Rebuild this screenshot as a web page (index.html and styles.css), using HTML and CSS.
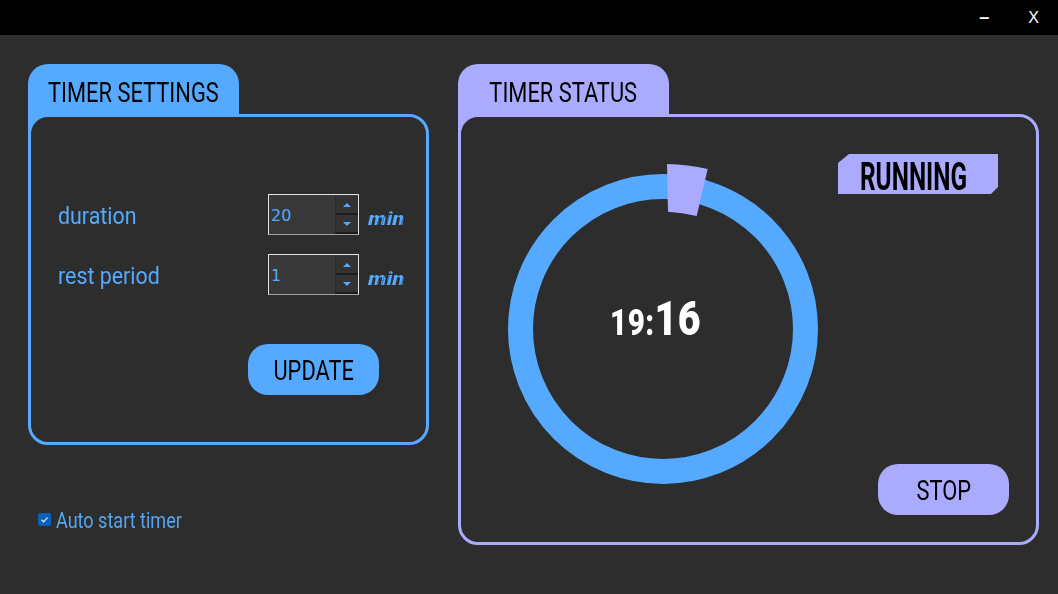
FILE: index.html
```html
<!DOCTYPE html>
<html lang="en">
<head>
<meta charset="utf-8">
<title>Timer</title>
<link rel="stylesheet" href="styles.css">
</head>
<body>
<div class="window">
  <header class="titlebar">
    <span class="win-btn win-min">–</span>
    <span class="win-btn win-close">X</span>
  </header>
  <main class="content">
    <section class="left-col">
      <div class="tab tab-blue"><span class="tab-text">TIMER SETTINGS</span></div>
      <div class="panel panel-blue settings">
        <div class="row">
          <span class="label"><span class="label-text">duration</span></span>
          <div class="spin"><span class="spin-value">20</span><div class="spin-btns"><span class="spin-btn"><i class="arrow-up"></i></span><span class="spin-btn"><i class="arrow-down"></i></span></div></div>
          <span class="unit">min</span>
        </div>
        <div class="row">
          <span class="label"><span class="label-text">rest period</span></span>
          <div class="spin"><span class="spin-value">1</span><div class="spin-btns"><span class="spin-btn"><i class="arrow-up"></i></span><span class="spin-btn"><i class="arrow-down"></i></span></div></div>
          <span class="unit">min</span>
        </div>
        <button class="btn btn-blue update"><span class="btn-text">UPDATE</span></button>
      </div>
      <label class="auto">
        <span class="check"><svg viewBox="0 0 13 13" width="13" height="13"><path d="M3.500 6.800 5.600 8.800 9.600 4.600" fill="none" stroke="#cfe3f7" stroke-width="1.300"/></svg></span>
        <span class="auto-text">Auto start timer</span>
      </label>
    </section>
    <section class="right-col">
      <div class="tab tab-purple"><span class="tab-text">TIMER STATUS</span></div>
      <div class="panel panel-purple status">
        <div class="dial">
          <svg class="ring" viewBox="0 0 330 340" width="330" height="340">
            <circle cx="165" cy="175" r="142.500" fill="none" stroke="#55aaff" stroke-width="25"/>
            <path d="M169 10 Q190 10.500 209.700 15 L198.700 62 Q184 58.500 170 57.700 Z" fill="#aaaaff"/>
          </svg>
          <div class="time"><span class="time-min">19:</span><span class="time-sec">16</span></div>
        </div>
        <div class="status-side">
          <div class="badge"><span class="badge-text">RUNNING</span></div>
          <button class="btn btn-purple stop"><span class="btn-text">STOP</span></button>
        </div>
      </div>
    </section>
  </main>
</div>
</body>
</html>
```
FILE: styles.css
```css
* { box-sizing: border-box; }
html, body { margin: 0; padding: 0; }
body {
  width: 1058px;
  height: 594px;
  overflow: hidden;
  background: #2d2d2d;
  font-family: Roboto, "Liberation Sans", sans-serif;
}
.window { display: flex; flex-direction: column; height: 594px; }
.titlebar {
  flex: 0 0 35px;
  background: #000;
  color: #fff;
  display: flex;
  justify-content: flex-end;
  align-items: center;
  padding-right: 19px;
  gap: 39px;
}
.win-btn { font-family: "Liberation Sans", sans-serif; font-size: 16px; line-height: 35px; }
.win-min { font-weight: 700; font-size: 18px; }
.content { display: flex; gap: 29px; padding: 29px 19px 0 28px; }
.left-col { width: 401px; flex: none; }
.right-col { width: 581px; flex: none; }
.tab {
  width: 211px;
  height: 70px;
  margin-bottom: -20px;
  border-radius: 20px 20px 0 0;
  color: #000;
  font-size: 27px;
  line-height: 59px;
  text-align: center;
  white-space: nowrap;
}
.tab-text { display: inline-block; transform: scaleX(0.81); }
.tab-blue { background: #55aaff; }
.tab-purple { background: #aaaaff; }
.panel {
  position: relative;
  background: #2d2d2d;
  border: 3px solid;
  border-radius: 20px;
}
.panel-blue { border-color: #55aaff; }
.panel-purple { border-color: #aaaaff; }
.settings {
  height: 331px;
  padding: 77px 23px 0 27px;
  display: flex;
  flex-direction: column;
  gap: 19px;
}
.row { display: flex; align-items: center; height: 41px; }
.label { flex: 1; color: #55aaff; font-size: 23px; line-height: 46px; margin-top: 4px; }
.label-text { display: inline-block; transform: scaleX(0.93); transform-origin: left center; }
.spin {
  width: 91px;
  height: 41px;
  display: flex;
  justify-content: space-between;
  background: #383838;
  border: 1px solid #e0e0e0;
  border-bottom-color: #a0a0a0;
}
.spin-value {
  font-family: "DejaVu Sans", sans-serif;
  font-size: 16px;
  line-height: 41px;
  color: #55aaff;
  padding-left: 2px;
}
.spin-btns { display: flex; flex-direction: column; width: 23px; margin-top: 1px; }
.spin-btn {
  flex: 1;
  display: flex;
  align-items: center;
  justify-content: center;
  background: #333;
  border-left: 1px solid #2a2a2a;
  border-bottom: 2px solid #1c1c1c;
}
.arrow-up, .arrow-down { width: 0; height: 0; border-left: 4px solid transparent; border-right: 4px solid transparent; }
.arrow-up { border-bottom: 4px solid #55aaff; }
.arrow-down { border-top: 4px solid #55aaff; }
.unit {
  width: 31px;
  margin-left: 9px;
  margin-top: 8px;
  margin-right: 4px;
  font-weight: 900;
  font-style: italic;
  font-size: 19px;
  line-height: 20px;
  color: transparent;
  background: repeating-linear-gradient(105deg, #55aaff 0 3px, #3f78b0 3px 4px);
  -webkit-background-clip: text;
  background-clip: text;
  transform: scaleX(1.16);
  transform-origin: left center;
}
.btn {
  height: 51px;
  width: 131px;
  border: 0;
  border-radius: 20px;
  font-family: inherit;
  font-size: 27px;
  color: #000;
  padding: 3px 0 0;
}
.btn-text { display: inline-block; transform: scaleX(0.81); }
.btn-blue { background: #55aaff; }
.btn-purple { background: #aaaaff; }
.update { align-self: flex-end; margin: 30px 24px 0 0; }
.auto {
  display: flex;
  align-items: center;
  gap: 5px;
  margin: 63px 0 0 10px;
  color: #55a5f0;
  font-size: 22px;
}
.auto-text { display: inline-block; transform: scaleX(0.82); transform-origin: left center; white-space: nowrap; }
.check { width: 13px; height: 13px; border-radius: 2px; background: #0a60b8; display: block; line-height: 0; margin-bottom: 2px; }
.status {
  height: 431px;
  padding: 34px 27px 27px 37px;
  display: flex;
}
.dial { position: relative; width: 330px; height: 340px; margin-top: 3px; flex: none; }
.ring { display: block; }
.time {
  position: absolute;
  left: 0;
  right: 15px;
  top: 130px;
  text-align: center;
  color: #fff;
  font-weight: 900;
  line-height: 70px;
  white-space: nowrap;
  letter-spacing: 0.5px;
  transform: scaleX(0.82);
}
.time-min { font-size: 36px; }
.time-sec { font-size: 48px; }
.status-side { flex: 1; display: flex; flex-direction: column; align-items: flex-end; justify-content: space-between; padding-top: 3px; }
.badge {
  width: 160px;
  height: 40px;
  margin-right: 11px;
  padding-left: 22px;
  background: #aaaaff;
  clip-path: polygon(11px 0, 100% 0, 100% 33px, 153px 100%, 0 100%, 0 9px);
  color: #000;
  font-weight: 700;
  font-size: 39px;
  line-height: 46px;
  white-space: nowrap;
}
.badge-text { display: inline-block; transform: scaleX(0.625); transform-origin: left center; }
```
